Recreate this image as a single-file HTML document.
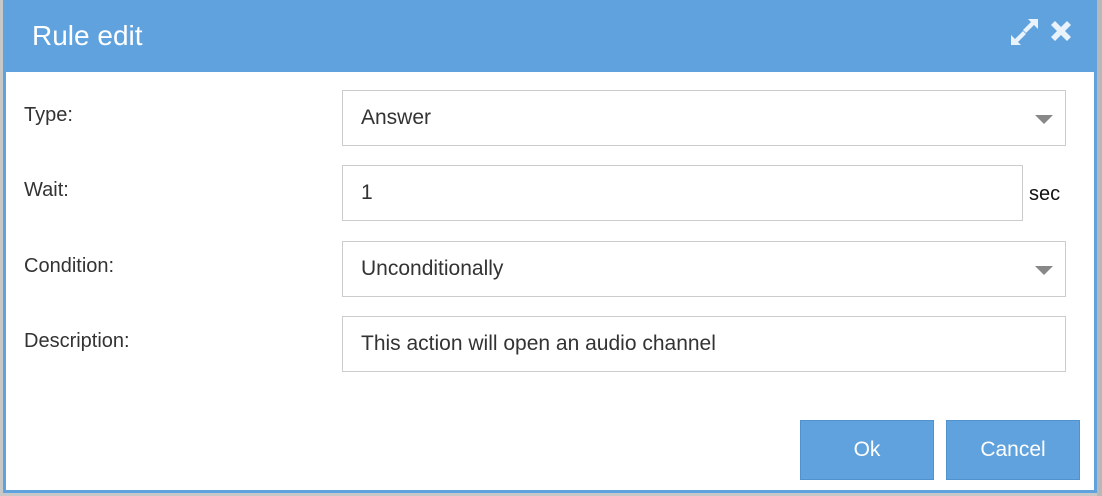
<!DOCTYPE html>
<html><head><style>
body{margin:0;width:1102px;height:496px;background:#c8c8c8;position:relative;overflow:hidden;font-family:"Liberation Sans",sans-serif;}
.dlg{position:absolute;left:3px;top:0;width:1088px;height:490px;background:#fff;border:3px solid #5fa2dd;border-top:0;}
.hdr{position:absolute;left:-3px;top:0;width:1094px;height:72px;background:#5fa2dd;}
.ttl{position:absolute;left:29px;top:20px;color:#fff;font-size:28px;}
.lbl{position:absolute;left:18px;font-size:20px;color:#333;}
.box{position:absolute;left:336px;height:56px;border:1px solid #ccc;background:#fff;font-size:21px;color:#333;line-height:54px;padding-left:18px;box-sizing:border-box;}
.arr{position:absolute;right:12px;top:24px;width:0;height:0;border-left:9px solid transparent;border-right:9px solid transparent;border-top:9px solid #888;}
.btn{position:absolute;top:420px;width:134px;height:60px;background:#5fa2dd;border:1px solid #4f92cd;box-sizing:border-box;color:#fff;font-size:21px;text-align:center;line-height:58px;}
</style></head><body>
<div style="position:absolute;right:0;top:0;width:5px;height:496px;background:#b8b8b8"></div>
<div class="dlg">
<div class="hdr"><div class="ttl">Rule edit</div>
<svg style="position:absolute;left:1005px;top:16px" width="70" height="32" viewBox="0 0 70 32">
<g fill="#eaf3fb"><path d="M3 29 L3 19 L7 23 L15 15 L18 18 L10 26 L13 29 Z"/><path d="M30 3 L30 13 L26 9 L18 17 L15 14 L23 6 L20 3 Z"/>
<path d="M43 9 L47 5 L53 11 L59 5 L63 9 L57 15 L63 21 L59 25 L53 19 L47 25 L43 21 L49 15 Z"/></g></svg>
</div>
<div class="lbl" style="top:104px">Type:</div>
<div class="lbl" style="top:179px">Wait:</div>
<div class="lbl" style="top:255px">Condition:</div>
<div class="lbl" style="top:330px">Description:</div>
<div class="box" style="top:90px;width:724px">Answer<div class="arr"></div></div>
<div class="box" style="top:165px;width:681px">1</div>
<div style="position:absolute;left:1023px;top:183px;font-size:20px;color:#111">sec</div>
<div class="box" style="top:241px;width:724px">Unconditionally<div class="arr"></div></div>
<div class="box" style="top:316px;width:724px">This action will open an audio channel</div>
<div class="btn" style="left:794px">Ok</div>
<div class="btn" style="left:940px">Cancel</div>
</div>
</body></html>
